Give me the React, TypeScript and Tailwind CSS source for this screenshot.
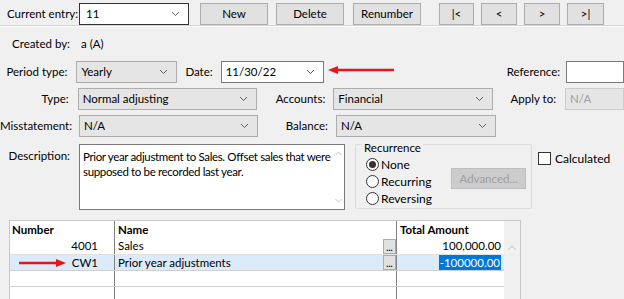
import React from "react";

const font = { fontFamily: 'Lato, "Liberation Sans", sans-serif' };

function Chevron() {
  return (
    <svg width="9" height="6" viewBox="0 0 9 6" className="shrink-0">
      <path d="M1 1 L4.5 4.5 L8 1" fill="none" stroke="#606060" strokeWidth="1" />
    </svg>
  );
}

function Select({ value, w, white }: { value: string; w: string; white?: boolean }) {
  return (
    <div
      className={`${w} h-[22px] flex items-center justify-between pl-[4px] pr-[8px] border ${
        white ? "bg-white border-[#7a7a7a]" : "bg-[#e5e5e5] border-[#adadad]"
      }`}
    >
      <span>{value}</span>
      <Chevron />
    </div>
  );
}

function Btn({ children, w }: { children: React.ReactNode; w: string }) {
  return (
    <div className={`${w} h-[22px] flex items-center justify-center bg-[#e1e1e1] border border-[#adadad]`}>
      {children}
    </div>
  );
}

function Radio({ checked, label }: { checked?: boolean; label: string }) {
  return (
    <div className="flex items-center gap-[2px] h-[17px]">
      <div className="w-[13px] h-[13px] rounded-full border border-[#333] bg-white flex items-center justify-center">
        {checked && <div className="w-[7px] h-[7px] rounded-full bg-[#333]" />}
      </div>
      <span className="text-[12px]">{label}</span>
    </div>
  );
}

function RedArrow({ w, left }: { w: number; left?: boolean }) {
  return (
    <svg width={w} height="8" viewBox={`0 0 ${w} 8`}>
      {left ? (
        <>
          <path d={`M8 4 L${w} 4`} stroke="#e8141c" strokeWidth="2.5" />
          <path d="M0 4 L10 0 L10 8 Z" fill="#e8141c" />
        </>
      ) : (
        <>
          <path d={`M0 4 L${w - 8} 4`} stroke="#e8141c" strokeWidth="2.5" />
          <path d={`M${w} 4 L${w - 10} 0 L${w - 10} 8 Z`} fill="#e8141c" />
        </>
      )}
    </svg>
  );
}

function EllipsisBtn() {
  return (
    <div className="w-[13px] h-[15px] bg-[#e1e1e1] border border-[#adadad] flex items-end justify-center text-[9px] leading-[9px] font-bold pb-[1px]">
      ...
    </div>
  );
}

export default function App() {
  return (
    <div className="w-[624px] h-[299px] overflow-hidden bg-[#f0f0f0] text-[11.5px] text-black leading-none whitespace-nowrap" style={font}>
      {/* Toolbar */}
      <div className="flex items-center h-[26px] pt-[2px] border-b border-[#d5d5d5]">
        <span className="w-[72px] pl-[7px]">Current entry:</span>
        <div className="ml-[7px]">
          <div className="w-[110px] h-[22px] flex items-center justify-between pl-[6px] pr-[8px] bg-white border border-[#333]">
            <span>11</span>
            <Chevron />
          </div>
        </div>
        <div className="ml-[11px] flex gap-[8px]">
          <Btn w="w-[68px]">New</Btn>
          <Btn w="w-[68px]">Delete</Btn>
          <div className="ml-[1px]">
            <Btn w="w-[68px]">Renumber</Btn>
          </div>
        </div>
        <div className="ml-[18px] flex gap-[7px]">
          <Btn w="w-[35px]">|&lt;</Btn>
          <Btn w="w-[36px]">&lt;</Btn>
          <Btn w="w-[36px]">&gt;</Btn>
          <Btn w="w-[37px]">&gt;|</Btn>
        </div>
      </div>
      <div className="h-px bg-white" />

      {/* Created by */}
      <div className="flex items-center h-[16px] mt-[9px]">
        <span className="w-[70px] text-right">Created by:</span>
        <span className="ml-[11px]">a (A)</span>
      </div>

      {/* Period type row */}
      <div className="flex items-center h-[22px] mt-[9px]">
        <span className="w-[70px] text-right">Period type:</span>
        <div className="ml-[9px]">
          <Select value="Yearly" w="w-[101px]" />
        </div>
        <span className="ml-[8px]">Date:</span>
        <div className="ml-[8px]">
          <Select value="11/30/22" w="w-[103px]" white />
        </div>
        <div className="ml-[4px] -mt-[5px]">
          <RedArrow w={66} left />
        </div>
        <span className="w-[173px] text-right">Reference:</span>
        <div className="ml-[6px] w-[60px] h-[22px] bg-white border border-[#7a7a7a]" />
      </div>

      {/* Type row */}
      <div className="flex items-center h-[22px] mt-[5px]">
        <span className="w-[70px] text-right">Type:</span>
        <div className="ml-[9px]">
          <Select value="Normal adjusting" w="w-[179px]" />
        </div>
        <span className="w-[70px] text-right">Accounts:</span>
        <div className="ml-[8px]">
          <Select value="Financial" w="w-[160px]" />
        </div>
        <span className="w-[64px] text-right">Apply to:</span>
        <div className="ml-[9px] w-[60px] h-[22px] bg-[#e5e5e5] border border-[#cccccc] flex items-center pl-[4px] text-[#a0a0a0]">
          N/A
        </div>
      </div>

      {/* Misstatement row */}
      <div className="flex items-center h-[22px] mt-[5px]">
        <span className="w-[70px] text-right">Misstatement:</span>
        <div className="ml-[9px]">
          <Select value="N/A" w="w-[179px]" />
        </div>
        <span className="w-[70px] text-right">Balance:</span>
        <div className="ml-[8px]">
          <Select value="N/A" w="w-[160px]" />
        </div>
      </div>

      {/* Description + Recurrence */}
      <div className="flex mt-[7px] h-[66px]">
        <span className="w-[70px] text-right mt-[6px]">Description:</span>
        <div className="ml-[9px] w-[266px] h-[66px] bg-white border border-[#7a7a7a] flex">
          <div className="flex-1 pl-[3px] pt-[4px] leading-[15px] whitespace-normal tracking-[-0.35px]">
            Prior year adjustment to Sales. Offset sales that were supposed to be recorded last year.
          </div>
          <div className="w-[12px] flex flex-col items-center justify-between py-[6px]">
            <svg width="7" height="5" viewBox="0 0 7 5">
              <path d="M0.5 4 L3.5 1 L6.5 4" fill="none" stroke="#c0c0c0" />
            </svg>
            <svg width="7" height="5" viewBox="0 0 7 5">
              <path d="M0.5 1 L3.5 4 L6.5 1" fill="none" stroke="#c0c0c0" />
            </svg>
          </div>
        </div>
        <div className="ml-[10px] w-[177px] h-[65px] relative border border-[#dcdcdc] rounded-[2px]">
          <span className="absolute -top-[3px] left-[6px] px-[2px] bg-[#f0f0f0]">Recurrence</span>
          <div className="flex pl-[10px] pt-[11px]">
            <div className="flex flex-col">
              <Radio checked label="None" />
              <Radio label="Recurring" />
              <Radio label="Reversing" />
            </div>
            <div className="ml-[19px] mt-[12px] w-[75px] h-[21px] bg-[#cccccc] border border-[#bfbfbf] flex items-center justify-center text-[#a0a0a0]">
              Advanced...
            </div>
          </div>
        </div>
        <div className="ml-[6px] mt-[8px] flex items-start gap-[4px]">
          <div className="w-[13px] h-[13px] bg-white border border-[#333]" />
          <span className="leading-[13px] text-[12px]">Calculated</span>
        </div>
      </div>

      {/* Grid */}
      <div className="ml-[9px] mt-[10px] w-[512px] h-[90px] bg-white border border-[#c8c8c8] flex">
        <div className="flex-1 flex flex-col">
          <div className="flex h-[17px] items-center font-bold">
            <div className="w-[104px] pl-[2px]">Number</div>
            <div className="w-[282px] pl-[3px] border-l border-[#808080] self-stretch flex items-center">Name</div>
            <div className="pl-[3px] border-l border-[#808080] self-stretch flex items-center">Total Amount</div>
          </div>
          <div className="flex h-[16px] items-center">
            <div className="w-[104px] text-right pr-[16px]">4001</div>
            <div className="w-[282px] pl-[3px] border-l border-[#808080] self-stretch flex items-center justify-between">
              <span>Sales</span>
              <EllipsisBtn />
            </div>
            <div className="flex-1 text-right pr-[3px] border-l border-[#808080] self-stretch flex items-center justify-end">100,000.00</div>
          </div>
          <div className="flex h-[17px] items-center bg-[#dcebfa] border-t border-[#e0e0e0] border-b border-b-[#d0d0d0]">
            <div className="w-[104px] flex items-center justify-between pl-[9px] pr-[16px]">
              <RedArrow w={47} />
              <span>CW1</span>
            </div>
            <div className="w-[282px] pl-[3px] border-l border-[#808080] self-stretch flex items-center justify-between">
              <span>Prior year adjustments</span>
              <EllipsisBtn />
            </div>
            <div className="flex-1 pr-[3px] border-l border-[#808080] self-stretch flex items-center justify-end">
              <span className="bg-[#0078d7] text-white px-[1px] h-[15px] flex items-center">-100000.00</span>
            </div>
          </div>
          <div className="flex h-[16px] border-b border-[#d0d0d0]">
            <div className="w-[104px]" />
            <div className="w-[282px] border-l border-[#808080]" />
            <div className="flex-1 border-l border-[#808080]" />
          </div>
          <div className="flex flex-1">
            <div className="w-[104px]" />
            <div className="w-[282px] border-l border-[#808080]" />
            <div className="flex-1 border-l border-[#808080]" />
          </div>
        </div>
        <div className="w-[16px] bg-[#f0f0f0] flex justify-center pt-[24px]">
          <svg width="8" height="5" viewBox="0 0 8 5">
            <path d="M0.5 4.5 L4 1 L7.5 4.5" fill="none" stroke="#c0c0c0" />
          </svg>
        </div>
      </div>
    </div>
  );
}
